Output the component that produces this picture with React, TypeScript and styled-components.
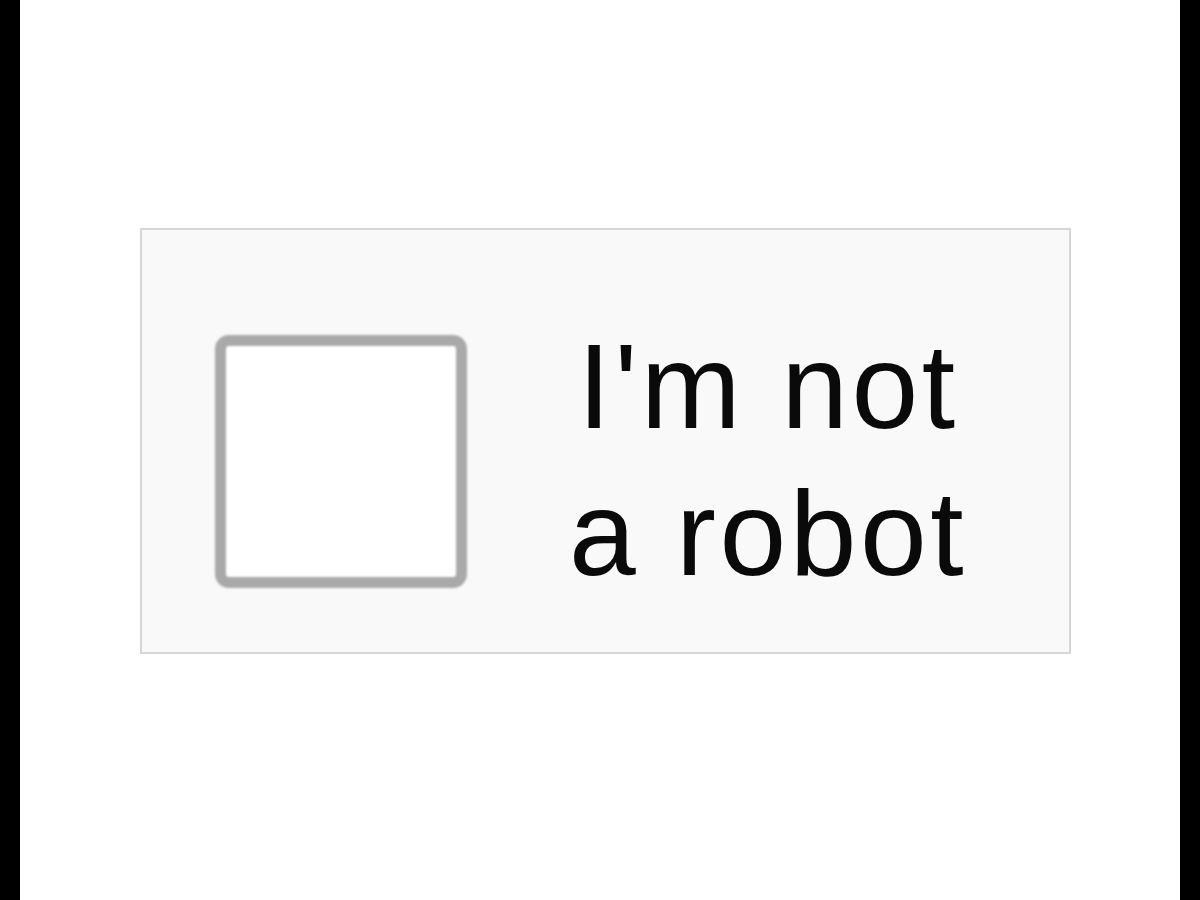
import React from 'react';
import styled, { createGlobalStyle } from 'styled-components';

const GlobalStyle = createGlobalStyle`
  html, body {
    margin: 0;
    padding: 0;
    background: #000;
  }
`;

const Page = styled.div`
  width: 1160px;
  height: 900px;
  margin: 0 20px;
  background: #fff;
  box-sizing: border-box;
  padding: 228px 0 0 120px;
`;

const Captcha = styled.div`
  width: 931px;
  height: 426px;
  box-sizing: border-box;
  display: flex;
  align-items: flex-start;
  gap: 102px;
  padding: 83px 0 0 73px;
  background: #f9f9f9;
  border: 2px solid #d6d6d6;
`;

const CheckBox = styled.div`
  flex: none;
  width: 252px;
  height: 253px;
  margin-top: 22px;
  box-sizing: border-box;
  background: #fff;
  border: 11px solid #a9a9a9;
  border-radius: 14px;
  filter: blur(1px);
`;

const Label = styled.div`
  font-family: 'Liberation Sans', Arial, sans-serif;
  font-size: 120px;
  line-height: 147px;
  letter-spacing: 3.5px;
  text-align: center;
  color: #0a0a0a;
  filter: blur(0.4px);
`;

export default function App(): JSX.Element {
  return (
    <>
      <GlobalStyle />
      <Page>
        <Captcha>
          <CheckBox />
          <Label>
            I'm not
            <br />
            a robot
          </Label>
        </Captcha>
      </Page>
    </>
  );
}
